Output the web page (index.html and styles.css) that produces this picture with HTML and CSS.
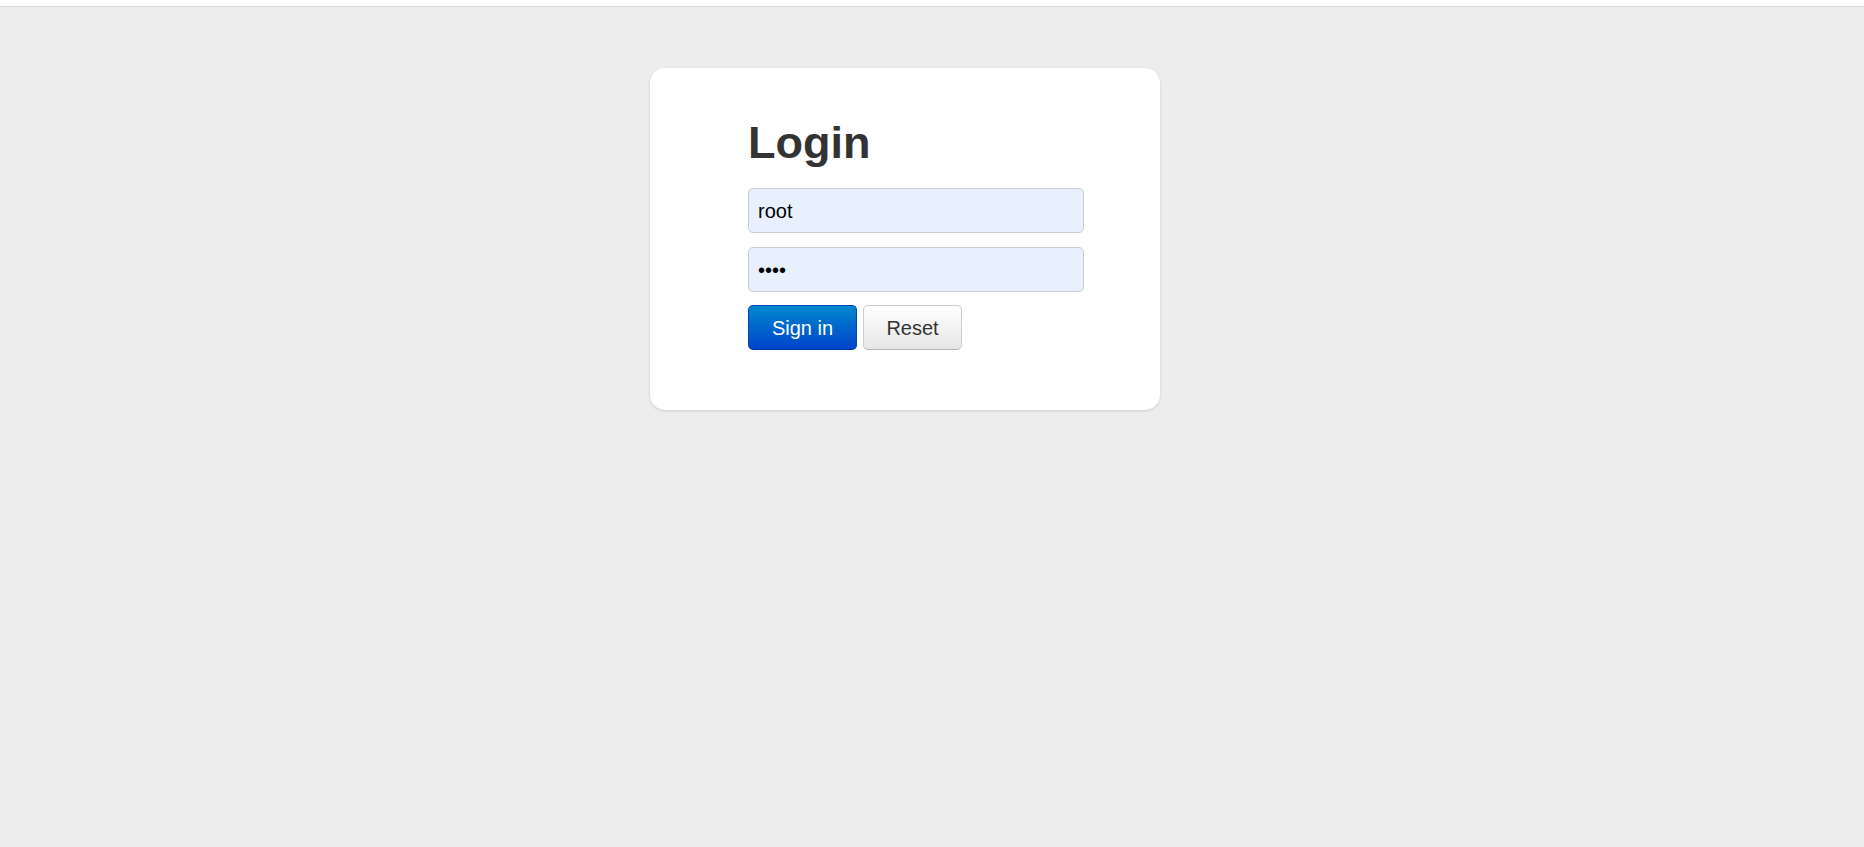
FILE: index.html
```html
<!DOCTYPE html>
<html lang="en">
<head>
<meta charset="utf-8">
<title>Login</title>
<link rel="stylesheet" href="styles.css">
</head>
<body>
<div class="topbar"></div>
<main class="page">
  <form class="card">
    <h1 class="title">Login</h1>
    <input class="field" type="text" value="root">
    <input class="field" type="password" value="1234">
    <div class="actions">
      <button type="button" class="btn btn-primary">Sign in</button>
      <button type="button" class="btn btn-default">Reset</button>
    </div>
  </form>
</main>
</body>
</html>
```

FILE: styles.css
```css
html, body {
  margin: 0;
  padding: 0;
  height: 100%;
}
body {
  background: #ededed;
  font-family: "Liberation Sans", Arial, sans-serif;
  color: #333;
}
.topbar {
  height: 6px;
  background: #fff;
  border-bottom: 1px solid #dcdcdf;
}
.page {
  padding: 61px 0 0 650px;
}
.card {
  box-sizing: border-box;
  width: 510px;
  background: #fff;
  border-radius: 15px;
  box-shadow: 0 1px 3px rgba(0, 0, 0, 0.14);
  padding: 51px 0 60px 98px;
  display: flex;
  flex-direction: column;
  align-items: flex-start;
}
.title {
  margin: 0 0 21px 0;
  font-size: 45px;
  line-height: 48px;
  font-weight: bold;
  color: #333;
}
.field {
  box-sizing: border-box;
  width: 336px;
  height: 45px;
  margin: 0 0 14px 0;
  padding: 1px 9px 0 9px;
  border: 1px solid #c9ccd3;
  border-radius: 5px;
  background: #e8f0fe;
  font-family: "Liberation Sans", Arial, sans-serif;
  font-size: 20px;
  color: #000;
  outline: none;
}
.actions {
  display: flex;
  gap: 6px;
  margin-top: -1px;
}
.btn {
  box-sizing: border-box;
  height: 45px;
  padding: 1px 22px 0 22px;
  border-radius: 5px;
  font-family: "Liberation Sans", Arial, sans-serif;
  font-size: 20px;
  line-height: 43px;
  cursor: pointer;
}
.btn-primary {
  width: 109px;
  color: #fff;
  background: linear-gradient(to bottom, #0088cc, #0044cc);
  border: 1px solid #0044b3;
  border-bottom-color: #003399;
}
.btn-default {
  width: 99px;
  color: #333;
  background: linear-gradient(to bottom, #ffffff, #e6e6e6);
  border: 1px solid #cccccc;
  border-bottom-color: #b3b3b3;
}
```
